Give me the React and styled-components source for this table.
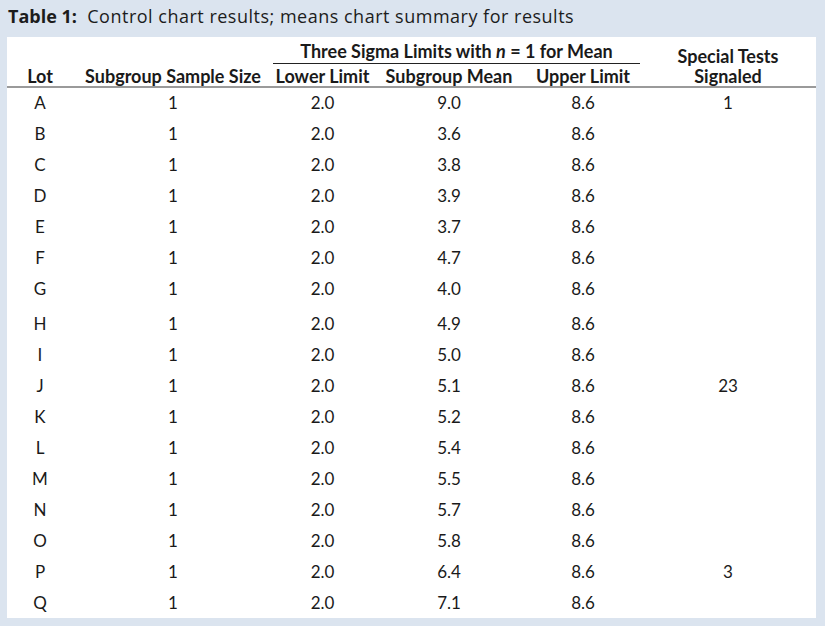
import React from 'react'
import styled, { createGlobalStyle } from 'styled-components'

const rows = [
  ['A', '9.0', '1'],
  ['B', '3.6', ''],
  ['C', '3.8', ''],
  ['D', '3.9', ''],
  ['E', '3.7', ''],
  ['F', '4.7', ''],
  ['G', '4.0', ''],
  ['H', '4.9', ''],
  ['I', '5.0', ''],
  ['J', '5.1', '23'],
  ['K', '5.2', ''],
  ['L', '5.4', ''],
  ['M', '5.5', ''],
  ['N', '5.7', ''],
  ['O', '5.8', ''],
  ['P', '6.4', '3'],
  ['Q', '7.1', ''],
]

const widths = [66, 200, 99, 154, 114, 176]

const App = () => {
  return (
    <>
      <GlobalStyle />
      <Page>
        <Title>
          <b>Table 1:</b>&nbsp; Control chart results; means chart summary for results
        </Title>
        <Panel>
          <Table>
            <colgroup>
              {widths.map((w, i) => <Col key={i} $w={w} />)}
            </colgroup>
            <thead>
              <tr>
                <Th $top />
                <Th $top />
                <SpanTh colSpan={3}>
                  Three Sigma Limits with <i>n</i> = 1 for Mean
                </SpanTh>
                <Th rowSpan={2} $last>Special Tests<br />Signaled</Th>
              </tr>
              <tr>
                <Th $last>Lot</Th>
                <Th $last>Subgroup Sample Size</Th>
                <Th $last>Lower Limit</Th>
                <Th $last>Subgroup Mean</Th>
                <Th $last>Upper Limit</Th>
              </tr>
            </thead>
            <tbody>
              {rows.map(([lot, mean, tests]) => (
                <Row key={lot} $gap={lot === 'H'}>
                  <Td>{lot}</Td>
                  <Td>1</Td>
                  <Td>2.0</Td>
                  <Td>{mean}</Td>
                  <Td>8.6</Td>
                  <Td>{tests}</Td>
                </Row>
              ))}
            </tbody>
          </Table>
        </Panel>
      </Page>
    </>
  )
}

export default App


// styled components

const GlobalStyle = createGlobalStyle`
  body {
    margin: 0;
    background: #dbe4ef;
    font-family: Lato, "Open Sans", sans-serif;
    color: #1a1a1a;
  }
`;

const Page = styled.div`
  width: 825px;
  height: 626px;
  box-sizing: border-box;
  padding: 0 9px 0 7px;
  background: #dbe4ef;
`;

const Title = styled.div`
  height: 37px;
  padding-left: 1px;
  font-family: "Open Sans", sans-serif;
  font-size: 18px;
  letter-spacing: 0.5px;
  line-height: 33px;
  color: #1c1c1c;
  white-space: nowrap;

  b {
    font-weight: 700;
    letter-spacing: 0;
  }
`;

const Panel = styled.div`
  background: #ffffff;
  width: 809px;
`;

const Table = styled.table`
  width: 809px;
  table-layout: fixed;
  border-collapse: collapse;
`;

const Col = styled.col`
  width: ${p => p.$w}px;
`;

const Th = styled.th`
  padding: 0;
  font-size: 18px;
  font-weight: 700;
  text-align: center;
  line-height: 20px;
  white-space: nowrap;
  vertical-align: ${p => (p.$last ? 'bottom' : 'middle')};
  height: ${p => (p.$top ? '26px' : '22px')};
  border-bottom: ${p => (p.$last ? '2px solid #9a9a9a' : 'none')};
`;

const SpanTh = styled.th`
  padding: 0 0 1px;
  height: 25px;
  font-size: 18px;
  font-weight: 700;
  line-height: 21px;
  text-align: center;
  vertical-align: bottom;
  border-bottom: 1px solid #222;

  i {
    font-weight: 700;
  }
`;

const Row = styled.tr`
  height: ${p => (p.$gap ? '35px' : '31px')};

  td {
    padding-top: ${p => (p.$gap ? '4px' : '0')};
  }
`;

const Td = styled.td`
  padding: 0;
  font-size: 17px;
  line-height: 20px;
  text-align: center;
  vertical-align: middle;
`;
